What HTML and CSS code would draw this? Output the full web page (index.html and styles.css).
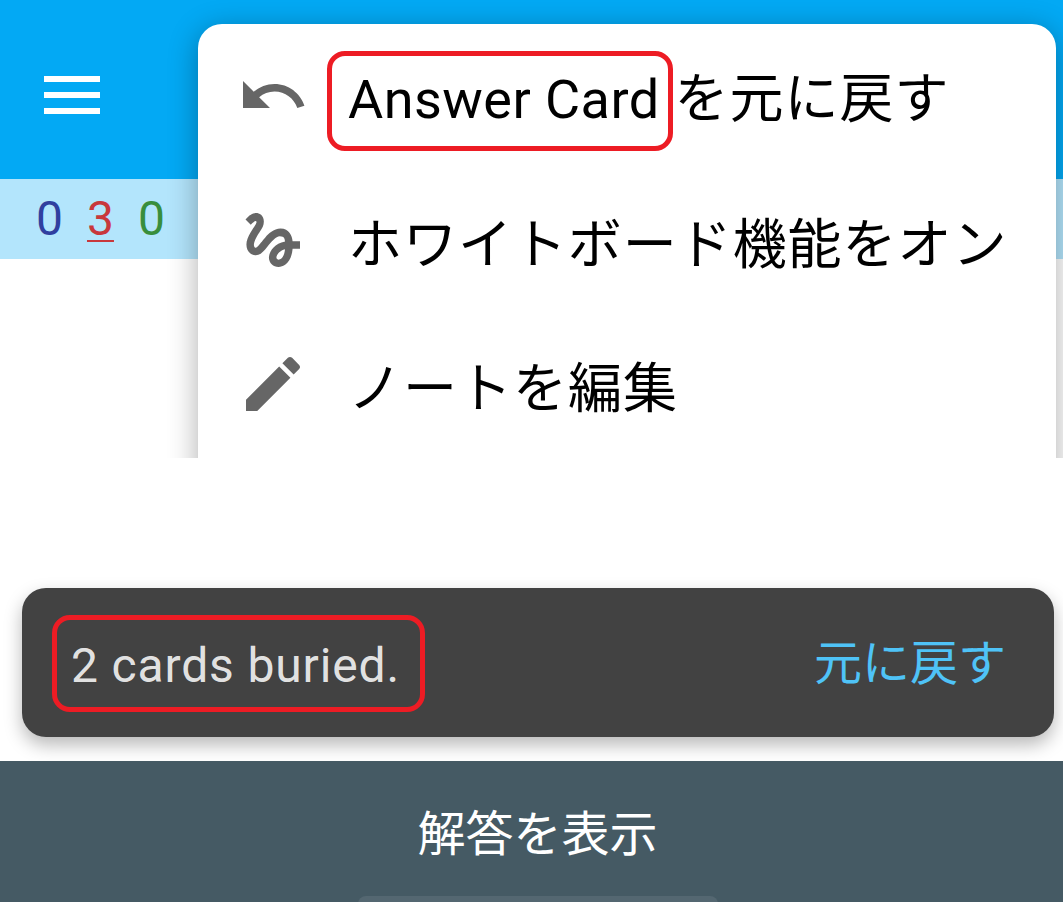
FILE: index.html
```html
<!DOCTYPE html>
<html lang="ja">
<head>
<meta charset="utf-8">
<title>Reviewer</title>
<link rel="stylesheet" href="styles.css">
</head>
<body>
<div class="page">
  <div class="top">
    <header class="appbar">
      <svg class="hamburger" viewBox="0 0 56 38"><rect width="56" height="6"/><rect y="16" width="56" height="6"/><rect y="32" width="56" height="6"/></svg>
    </header>
    <div class="counts">
      <span class="count new">0</span>
      <span class="count learn">3</span>
      <span class="count due">0</span>
    </div>
    <div class="menu">
      <div class="row">
        <svg class="icon" viewBox="0 0 24 24"><path d="M12.5 8c-2.65 0-5.05.99-6.9 2.6L2 7v9h9l-3.62-3.62c1.39-1.16 3.16-1.88 5.12-1.88 3.54 0 6.55 2.31 7.6 5.5l2.37-.78C21.08 11.03 17.15 8 12.5 8z"/></svg>
        <span class="label label-undo"><span class="mark mark-menu">Answer Card</span><span class="rest">を元に戻す</span></span>
      </div>
      <div class="row">
        <svg class="icon" viewBox="0 0 24 24"><path d="M4.59 6.89c.7-.71 1.4-1.35 1.71-1.22.5.2 0 1.03-.3 1.52-.25.42-2.86 3.89-2.86 6.31 0 1.28.48 2.34 1.34 2.98.75.56 1.74.73 2.64.46 1.07-.31 1.95-1.4 3.06-2.77 1.21-1.49 2.83-3.44 4.08-3.44 1.63 0 1.65 1.01 1.76 1.79-3.78.64-5.38 3.67-5.38 5.37 0 1.7 1.44 3.09 3.21 3.09 1.63 0 4.29-1.33 4.69-6.1H21v-2.5h-2.47c-.15-1.65-1.09-4.2-4.03-4.2-2.25 0-4.18 1.91-4.94 2.84-.58.73-2.06 2.48-2.29 2.72-.25.3-.68.84-1.11.84-.45 0-.72-.83-.36-1.92.35-1.09 1.4-2.86 1.85-3.52.78-1.14 1.3-1.92 1.3-3.28C8.95 3.69 7.31 3 6.44 3 5.12 3 3.97 4 3.72 4.25c-.36.36-.66.66-.88.93l1.75 1.71zm9.29 11.66c-.31 0-.74-.26-.74-.72 0-.6.73-2.2 2.87-2.76-.3 2.69-1.43 3.48-2.13 3.48z"/></svg>
        <span class="label label-board">ホワイトボード機能をオン</span>
      </div>
      <div class="row">
        <svg class="icon" viewBox="0 0 24 24"><path d="M3 17.25V21h3.75L17.81 9.94l-3.75-3.75L3 17.25zM20.71 7.04c.39-.39.39-1.02 0-1.41l-2.34-2.34c-.39-.39-1.02-.39-1.41 0l-1.83 1.83 3.75 3.75 1.83-1.83z"/></svg>
        <span class="label label-note">ノートを編集</span>
      </div>
    </div>
  </div>
  <div class="snackbar">
    <span class="snack-text"><span class="mark mark-snack">2 cards buried.</span></span>
    <span class="snack-action">元に戻す</span>
  </div>
  <div class="bottom">
    <span class="answer">解答を表示</span>
    <div class="handle"></div>
  </div>
</div>
</body>
</html>
```

FILE: styles.css
```css
* { box-sizing: border-box; }
html, body { margin: 0; padding: 0; background: #fff; }
body { font-family: Roboto, "Noto Sans CJK JP", sans-serif; overflow: hidden; }
.page { width: 1063px; height: 902px; display: flex; flex-direction: column; }

.top { position: relative; height: 458px; flex: none; overflow: hidden; }
.appbar { height: 179px; background: #03a9f4; display: flex; align-items: center; padding: 11px 0 0 44px; }
.hamburger { width: 56px; height: 38px; fill: #fff; }
.counts { height: 80px; background: #b3e5fc; display: flex; align-items: center; gap: 24px; padding-left: 36px; font-size: 48px; line-height: 80px; }
.count { display: block; }
.new { color: #303f9f; }
.learn { color: #c8383c; text-decoration: underline; text-decoration-thickness: 2px; text-underline-offset: 5px; }
.due { color: #388e3c; }

.menu { position: absolute; left: 198px; top: 24px; width: 858px; height: 520px; background: #fff; border-radius: 24px; box-shadow: 0 6px 30px rgba(0,0,0,.32); }
.row { height: 144px; display: flex; align-items: center; padding-left: 39px; gap: 39px; }
.icon { width: 72px; height: 72px; fill: #666; flex: none; }
.label { font-size: 54px; color: #000; white-space: nowrap; }
.label-undo { letter-spacing: .45px; padding-bottom: 3px; }
.label-board { letter-spacing: .95px; }
.label-note { letter-spacing: 1px; }
.rest { margin-left: 15px; letter-spacing: 1px; }

.mark { position: relative; display: inline-block; }
.mark::after { content: ""; position: absolute; border: 5px solid #ed1c24; border-radius: 18px; }
.mark-menu::after { left: -21px; right: -13px; top: -17px; bottom: -20px; }
.mark-snack::after { left: -19px; right: -25px; top: -22px; bottom: -18px; }

.snackbar { margin: 130px 9px 0 22px; height: 149px; flex: none; background: #424242; border-radius: 24px; box-shadow: 0 8px 18px rgba(0,0,0,.28); display: flex; align-items: center; justify-content: space-between; padding: 0 48px 0 49px; font-size: 48px; }
.snack-text { color: rgba(255,255,255,.87); letter-spacing: .85px; padding-top: 6px; }
.snack-action { color: #4fc3f7; padding-bottom: 8px; }

.bottom { position: relative; margin-top: 24px; flex: 1; background: #455a64; display: flex; justify-content: center; padding: 38px 0 0 12px; }
.answer { font-size: 48px; color: #fff; line-height: 72px; height: 72px; }
.handle { position: absolute; left: 358px; bottom: -10px; width: 360px; height: 16px; border-radius: 8px; background: #546771; }
```
